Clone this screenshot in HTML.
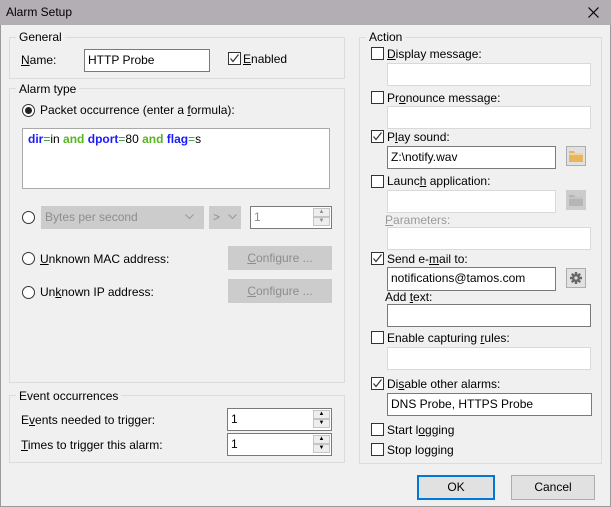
<!DOCTYPE html>
<html><head><meta charset="utf-8"><style>
*{box-sizing:border-box;margin:0;padding:0}
body{width:611px;height:507px;overflow:hidden;background:#f0f0f0;font-family:"Liberation Sans",sans-serif;font-size:12px;color:#000;position:relative}
.a{position:absolute;white-space:nowrap}
.tb{left:0;top:0;width:611px;height:25px;background:#b3adb4}
.win{left:0;top:25px;width:611px;height:482px;border:1px solid #9a9a9a;border-top:none}
.grp{border:1px solid #dcdcdc}
.leg{background:#f0f0f0;padding:0 3px}
.inp{background:#fff;border:1px solid #7a7a7a;padding:3px 3px;line-height:14px}
.dis{background:#fff;border:1px solid #d9d9d9}
.cb{width:13px;height:13px;border:1px solid #333;background:#fff}
.rb{width:13px;height:13px;border:1px solid #333;border-radius:50%;background:#fff}
.btn{background:#e1e1e1;border:1px solid #adadad;text-align:center;line-height:22px}
.gbtn{background:#cccccc;border:1px solid #cccccc;color:#8d8d8d;text-align:center;line-height:22px}
u{text-decoration:underline}
.spin{position:absolute;right:1px;width:17px;height:9px;border:1px solid #c5c5c5;background:#eee;font-size:6px;line-height:7px;text-align:center}
</style></head><body>
<div class="a tb"></div>
<div class="a" style="left:6px;top:5px;font-size:12px">Alarm Setup</div>
<svg class="a" style="left:588px;top:7px" width="11" height="11"><path d="M0.5 0.5L10.5 10.5M10.5 0.5L0.5 10.5" stroke="#000" stroke-width="1.2"/></svg>
<div class="a win"></div>

<!-- General -->
<div class="a grp" style="left:9px;top:37px;width:336px;height:42px"></div>
<div class="a leg" style="left:16px;top:30px">General</div>
<div class="a" style="left:21px;top:53px"><u>N</u>ame:</div>
<div class="a inp" style="left:84px;top:49px;width:126px;height:23px">HTTP Probe</div>
<div class="a cb" style="left:228px;top:52px"></div>
<svg class="a" style="left:229px;top:53px" width="11" height="11"><path d="M1.5 5.5L4 8.5L9.5 1.5" stroke="#333" stroke-width="1.2" fill="none"/></svg>
<div class="a" style="left:243px;top:52px"><u>E</u>nabled</div>

<!-- Alarm type -->
<div class="a grp" style="left:9px;top:88px;width:336px;height:295px"></div>
<div class="a leg" style="left:16px;top:82px">Alarm type</div>
<div class="a rb" style="left:22px;top:104px"></div>
<div class="a" style="left:25px;top:107px;width:7px;height:7px;border-radius:50%;background:#222"></div>
<div class="a" style="left:40px;top:103px">Packet occurrence (enter a <u>f</u>ormula):</div>
<div class="a" style="left:22px;top:128px;width:308px;height:61px;background:#fff;border:1px solid #aaa"></div>
<div class="a" style="left:28px;top:132px"><b style="color:#1a1aff">dir</b><span style="color:#2a9a2a">=</span>in <b style="color:#55b51e">and</b> <b style="color:#1a1aff">dport</b><span style="color:#2a9a2a">=</span>80 <b style="color:#55b51e">and</b> <b style="color:#1a1aff">flag</b><span style="color:#2a9a2a">=</span>s</div>

<div class="a rb" style="left:22px;top:211px"></div>
<div class="a" style="left:41px;top:206px;width:163px;height:23px;background:#ccc;color:#8d8d8d;padding:4px 4px">Bytes per second</div>
<svg class="a" style="left:185px;top:214px" width="9" height="6"><path d="M0.5 0.5L4.5 4.5L8.5 0.5" stroke="#999" fill="none"/></svg>
<div class="a" style="left:209px;top:206px;width:32px;height:23px;background:#ccc;color:#8d8d8d;padding:4px 4px">&gt;</div>
<svg class="a" style="left:228px;top:214px" width="9" height="6"><path d="M0.5 0.5L4.5 4.5L8.5 0.5" stroke="#999" fill="none"/></svg>
<div class="a inp" style="left:250px;top:206px;width:82px;height:23px;color:#8d8d8d">1<div class="spin" style="top:1px">▲</div><div class="spin" style="top:10px">▼</div></div>

<div class="a rb" style="left:22px;top:252px"></div>
<div class="a" style="left:40px;top:252px"><u>U</u>nknown MAC address:</div>
<div class="a gbtn" style="left:228px;top:246px;width:104px;height:24px"><u>C</u>onfigure ...</div>
<div class="a rb" style="left:22px;top:286px"></div>
<div class="a" style="left:40px;top:285px">Un<u>k</u>nown IP address:</div>
<div class="a gbtn" style="left:228px;top:279px;width:104px;height:24px"><u>C</u>onfigure ...</div>

<!-- Event occurrences -->
<div class="a grp" style="left:9px;top:395px;width:336px;height:68px"></div>
<div class="a leg" style="left:16px;top:389px">Event occurrences</div>
<div class="a" style="left:21px;top:413px">E<u>v</u>ents needed to trigger:</div>
<div class="a inp" style="left:227px;top:408px;width:105px;height:23px">1<div class="spin" style="top:1px">▲</div><div class="spin" style="top:10px">▼</div></div>
<div class="a" style="left:21px;top:438px"><u>T</u>imes to trigger this alarm:</div>
<div class="a inp" style="left:227px;top:433px;width:105px;height:23px">1<div class="spin" style="top:1px">▲</div><div class="spin" style="top:10px">▼</div></div>

<!-- Action -->
<div class="a grp" style="left:359px;top:37px;width:243px;height:427px"></div>
<div class="a leg" style="left:366px;top:30px">Action</div>

<div class="a cb" style="left:371px;top:47px"></div>
<div class="a" style="left:387px;top:47px"><u>D</u>isplay message:</div>
<div class="a dis" style="left:387px;top:63px;width:204px;height:23px"></div>

<div class="a cb" style="left:371px;top:91px"></div>
<div class="a" style="left:387px;top:91px">Pr<u>o</u>nounce message:</div>
<div class="a dis" style="left:387px;top:106px;width:204px;height:23px"></div>

<div class="a cb" style="left:371px;top:130px"></div>
<svg class="a" style="left:372px;top:131px" width="11" height="11"><path d="M1.5 5.5L4 8.5L9.5 1.5" stroke="#333" stroke-width="1.2" fill="none"/></svg>
<div class="a" style="left:387px;top:130px">P<u>l</u>ay sound:</div>
<div class="a inp" style="left:387px;top:146px;width:169px;height:23px">Z:\notify.wav</div>
<div class="a" style="left:566px;top:146px;width:20px;height:20px;background:#e1e1e1;border:1px solid #adadad"></div>
<svg class="a" style="left:569px;top:150px" width="14" height="12"><path d="M0 1h5l1 2h8v9H0z" fill="#e8b55c"/><path d="M0 4h14" stroke="#fff" stroke-width="0.8"/></svg>

<div class="a cb" style="left:371px;top:175px"></div>
<div class="a" style="left:387px;top:174px">Launc<u>h</u> application:</div>
<div class="a dis" style="left:387px;top:190px;width:169px;height:23px"></div>
<div class="a" style="left:566px;top:190px;width:20px;height:20px;background:#ccc;border:1px solid #ccc"></div>
<svg class="a" style="left:569px;top:194px" width="14" height="12"><path d="M0 1h5l1 2h8v9H0z" fill="#b5b5b5"/><path d="M0 4h14" stroke="#ddd" stroke-width="0.8"/></svg>
<div class="a" style="left:385px;top:213px;color:#9a9a9a"><u>P</u>arameters:</div>
<div class="a dis" style="left:387px;top:227px;width:204px;height:23px"></div>

<div class="a cb" style="left:371px;top:252px"></div>
<svg class="a" style="left:372px;top:253px" width="11" height="11"><path d="M1.5 5.5L4 8.5L9.5 1.5" stroke="#333" stroke-width="1.2" fill="none"/></svg>
<div class="a" style="left:387px;top:252px">Send e-<u>m</u>ail to:</div>
<div class="a inp" style="left:387px;top:267px;width:169px;height:24px">notifications@tamos.com</div>
<div class="a" style="left:566px;top:268px;width:20px;height:20px;background:#e1e1e1;border:1px solid #adadad"></div>
<svg class="a" style="left:569px;top:271px" width="14" height="14" viewBox="0 0 14 14"><g stroke="#666" stroke-width="2.4"><path d="M7 1v12M1 7h12M2.8 2.8l8.4 8.4M11.2 2.8l-8.4 8.4"/></g><circle cx="7" cy="7" r="4" fill="#666"/><circle cx="7" cy="7" r="1.6" fill="#e1e1e1"/></svg>
<div class="a" style="left:385px;top:290px">Add <u>t</u>ext:</div>
<div class="a inp" style="left:387px;top:304px;width:204px;height:23px"></div>

<div class="a cb" style="left:371px;top:331px"></div>
<div class="a" style="left:387px;top:331px">Enable capturing <u>r</u>ules:</div>
<div class="a dis" style="left:387px;top:347px;width:204px;height:23px"></div>

<div class="a cb" style="left:371px;top:377px"></div>
<svg class="a" style="left:372px;top:378px" width="11" height="11"><path d="M1.5 5.5L4 8.5L9.5 1.5" stroke="#333" stroke-width="1.2" fill="none"/></svg>
<div class="a" style="left:387px;top:377px">Di<u>s</u>able other alarms:</div>
<div class="a inp" style="left:387px;top:393px;width:205px;height:23px">DNS Probe, HTTPS Probe</div>

<div class="a cb" style="left:371px;top:423px"></div>
<div class="a" style="left:387px;top:423px">Start l<u>o</u>gging</div>
<div class="a cb" style="left:371px;top:443px"></div>
<div class="a" style="left:387px;top:443px">Stop lo<u>g</u>ging</div>

<div class="a btn" style="left:417px;top:475px;width:78px;height:25px;border:2px solid #0078d7;line-height:21px">OK</div>
<div class="a btn" style="left:511px;top:475px;width:84px;height:25px">Cancel</div>
</body></html>
